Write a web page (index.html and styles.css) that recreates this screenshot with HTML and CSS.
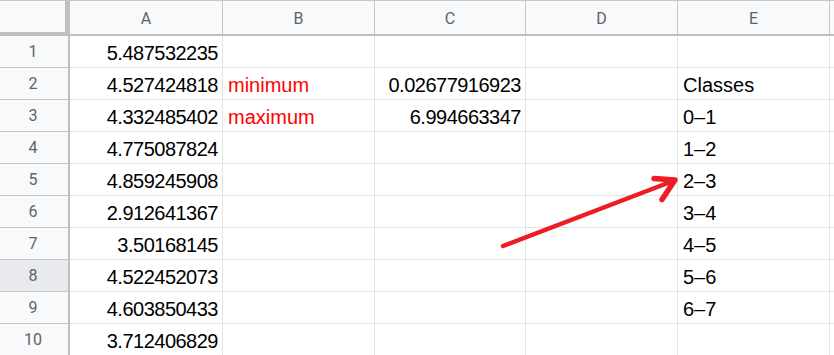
FILE: index.html
```html
<!DOCTYPE html>
<html>
<head>
<meta charset="utf-8">
<link rel="stylesheet" href="styles.css">
</head>
<body>
<div class="sheet">
  <div class="grid">
    <div class="corner"></div>
    <div class="colhead">A</div>
    <div class="colhead">B</div>
    <div class="colhead">C</div>
    <div class="colhead">D</div>
    <div class="colhead">E</div>
    <div class="colhead"></div>

    <div class="rowhead">1</div>
    <div class="cell num">5.487532235</div>
    <div class="cell"></div><div class="cell"></div><div class="cell"></div><div class="cell"></div><div class="cell"></div>

    <div class="rowhead">2</div>
    <div class="cell num">4.527424818</div>
    <div class="cell red">minimum</div>
    <div class="cell num">0.02677916923</div>
    <div class="cell"></div>
    <div class="cell">Classes</div>
    <div class="cell"></div>

    <div class="rowhead">3</div>
    <div class="cell num">4.332485402</div>
    <div class="cell red">maximum</div>
    <div class="cell num">6.994663347</div>
    <div class="cell"></div>
    <div class="cell">0–1</div>
    <div class="cell"></div>

    <div class="rowhead">4</div>
    <div class="cell num">4.775087824</div>
    <div class="cell"></div><div class="cell"></div><div class="cell"></div>
    <div class="cell">1–2</div>
    <div class="cell"></div>

    <div class="rowhead">5</div>
    <div class="cell num">4.859245908</div>
    <div class="cell"></div><div class="cell"></div><div class="cell"></div>
    <div class="cell">2–3</div>
    <div class="cell"></div>

    <div class="rowhead">6</div>
    <div class="cell num">2.912641367</div>
    <div class="cell"></div><div class="cell"></div><div class="cell"></div>
    <div class="cell">3–4</div>
    <div class="cell"></div>

    <div class="rowhead">7</div>
    <div class="cell num">3.50168145</div>
    <div class="cell"></div><div class="cell"></div><div class="cell"></div>
    <div class="cell">4–5</div>
    <div class="cell"></div>

    <div class="rowhead hover">8</div>
    <div class="cell num">4.522452073</div>
    <div class="cell"></div><div class="cell"></div><div class="cell"></div>
    <div class="cell">5–6</div>
    <div class="cell"></div>

    <div class="rowhead">9</div>
    <div class="cell num">4.603850433</div>
    <div class="cell"></div><div class="cell"></div><div class="cell"></div>
    <div class="cell">6–7</div>
    <div class="cell"></div>

    <div class="rowhead">10</div>
    <div class="cell num">3.712406829</div>
    <div class="cell"></div><div class="cell"></div><div class="cell"></div><div class="cell"></div><div class="cell"></div>
  </div>
  <svg class="arrow" width="834" height="355" viewBox="0 0 834 355">
    <g stroke="#ee1d23" fill="none" stroke-linecap="round" stroke-linejoin="round">
      <path d="M503 246 L673 181" stroke-width="4.5"/>
      <path d="M654 178.5 L675 180 L662 199.5" stroke-width="5.5"/>
    </g>
  </svg>
</div>
</body>
</html>
```

FILE: styles.css
```css
html, body {
  margin: 0;
  padding: 0;
  background: #ffffff;
  overflow: hidden;
}

.sheet {
  position: relative;
  width: 834px;
  height: 355px;
  overflow: hidden;
}

.grid {
  display: grid;
  grid-template-columns: 70px 153px 152px 151px 152px 152px 20px;
  grid-template-rows: 36px repeat(10, 32px);
  font-family: "Liberation Sans", Arial, sans-serif;
  font-size: 20px;
  color: #000000;
}

.grid > div {
  box-sizing: border-box;
  overflow: hidden;
  white-space: nowrap;
}

.corner {
  background: #f8f9fa;
  border-top: 1px solid #c4c7c5;
  border-right: 5px solid #c0c0c0;
  border-bottom: 4px solid #c0c0c0;
}

.colhead {
  background: #f8f9fa;
  border-top: 1px solid #c4c7c5;
  border-right: 1px solid #c4c7c5;
  border-bottom: 2px solid #c0c0c0;
  display: flex;
  align-items: center;
  justify-content: center;
  font-family: Roboto, "Liberation Sans", sans-serif;
  font-size: 16px;
  color: #5f6368;
  padding-top: 1px;
}

.rowhead {
  background: #f8f9fa;
  border-right: 2px solid #c0c0c0;
  border-bottom: 1px solid #c4c7c5;
  display: flex;
  align-items: center;
  justify-content: center;
  font-family: Roboto, "Liberation Sans", sans-serif;
  font-size: 16px;
  color: #5f6368;
  padding-right: 2px;
}

.rowhead.hover {
  background: #e8eaed;
}

.cell {
  border-right: 1px solid #e2e3e3;
  border-bottom: 1px solid #e2e3e3;
  display: flex;
  align-items: flex-end;
  line-height: 23px;
  padding: 0 4px 2px 5px;
}

.cell.num {
  justify-content: flex-end;
  letter-spacing: -0.5px;
}

.cell.red {
  color: #ff0000;
}

.arrow {
  position: absolute;
  left: 0;
  top: 0;
  pointer-events: none;
}
```
